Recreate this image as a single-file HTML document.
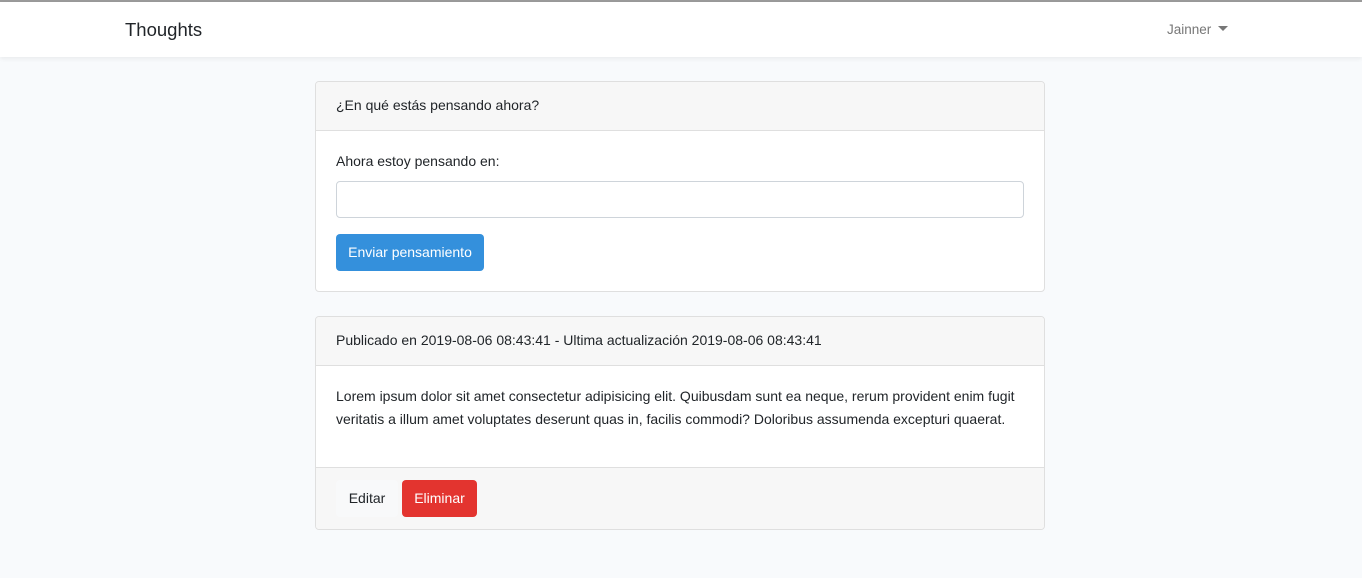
<!DOCTYPE html>
<html><head><meta charset="utf-8"><style>
*{box-sizing:border-box;margin:0;padding:0}
body{width:1362px;height:578px;background:#f8fafc;font-family:"Liberation Sans",sans-serif;font-size:14px;color:#212529;position:relative;overflow:hidden}
.top{position:absolute;left:0;top:0;width:100%;height:2px;background:#9a9a9a}
.nav{position:absolute;left:0;top:2px;width:100%;height:55px;background:#fff;box-shadow:0 2px 4px rgba(0,0,0,.06)}
.brand{position:absolute;left:125px;top:17px;font-size:18.5px;color:#212529}
.user{position:absolute;left:1167px;top:20px;font-size:13.5px;color:#777}
.caret{display:inline-block;margin-left:7px;vertical-align:3px;border-left:5px solid transparent;border-right:5px solid transparent;border-top:5px solid #777}
.card{position:absolute;left:315px;width:730px;background:#fff;border:1px solid #dfdfdf;border-radius:4px;overflow:hidden}
.hd{height:49px;background:#f7f7f7;border-bottom:1px solid #dfdfdf;padding:15px 20px 0}
.abs{position:absolute}
.btn{position:absolute;height:37px;border-radius:4px;line-height:37px;text-align:center;font-size:14px}
</style></head><body>
<div class="top"></div>
<div class="nav"><div class="brand">Thoughts</div><div class="user">Jainner<span class="caret"></span></div></div>
<div class="card" style="top:81px;height:211px">
<div class="hd">¿En qué estás pensando ahora?</div>
<div class="abs" style="left:20px;top:71px">Ahora estoy pensando en:</div>
<div class="abs" style="left:20px;top:99px;width:688px;height:37px;border:1px solid #ced4da;border-radius:4px"></div>
<div class="btn" style="left:20px;top:152px;width:148px;background:#3490dc;color:#fff">Enviar pensamiento</div>
</div>
<div class="card" style="top:316px;height:214px">
<div class="hd">Publicado en 2019-08-06 08:43:41 - Ultima actualización 2019-08-06 08:43:41</div>
<div class="abs" style="left:20px;top:68px;width:690px;line-height:23px;font-size:14px">Lorem ipsum dolor sit amet consectetur adipisicing elit. Quibusdam sunt ea neque, rerum provident enim fugit veritatis a illum amet voluptates deserunt quas in, facilis commodi? Doloribus assumenda excepturi quaerat.</div>
<div class="abs" style="left:0;top:150px;width:730px;height:64px;background:#f7f7f7;border-top:1px solid #dfdfdf"></div>
<div class="btn" style="left:20px;top:163px;width:62px;background:#f8f9fa;color:#212529">Editar</div>
<div class="btn" style="left:86px;top:163px;width:75px;background:#e3342f;color:#fff">Eliminar</div>
</div>
</body></html>
